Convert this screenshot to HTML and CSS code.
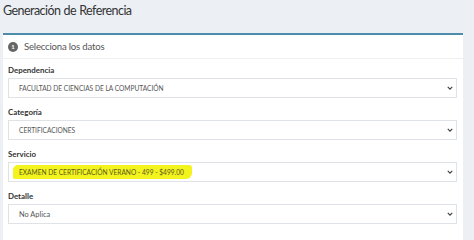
FILE: index.html
```html
<!DOCTYPE html>
<html lang="es">
<head>
<meta charset="utf-8">
<link rel="stylesheet" href="styles.css">
</head>
<body>
<h1 class="page-title">Generación de Referencia</h1>
<div class="box">
  <div class="box-header">
    <span class="step">1</span>
    <span class="box-title">Selecciona los datos</span>
  </div>
  <div class="box-body">
    <div class="group">
      <div class="label">Dependencia</div>
      <div class="select"><span class="value">FACULTAD DE CIENCIAS DE LA COMPUTACIÓN</span><svg class="chev" viewBox="0 0 8 5"><path d="M1 1 L4 4 L7 1" /></svg></div>
    </div>
    <div class="group">
      <div class="label">Categoría</div>
      <div class="select"><span class="value">CERTIFICACIONES</span><svg class="chev" viewBox="0 0 8 5"><path d="M1 1 L4 4 L7 1" /></svg></div>
    </div>
    <div class="group">
      <div class="label">Servicio</div>
      <div class="select"><span class="value highlight">EXAMEN DE CERTIFICACIÓN VERANO - 499 - $499.00</span><svg class="chev" viewBox="0 0 8 5"><path d="M1 1 L4 4 L7 1" /></svg></div>
    </div>
    <div class="group">
      <div class="label">Detalle</div>
      <div class="select"><span class="value normal">No Aplica</span><svg class="chev" viewBox="0 0 8 5"><path d="M1 1 L4 4 L7 1" /></svg></div>
    </div>
  </div>
</div>
</body>
</html>
```
FILE: styles.css
```css
html, body {
  margin: 0;
  padding: 0;
  background: #ecf0f5;
  font-family: "Lato", "Noto Sans", sans-serif;
  color: #444;
}
.page-title {
  margin: 0;
  padding: 4px 0 0 3px;
  height: 33px;
  box-sizing: border-box;
  font-size: 12.5px;
  line-height: 14px;
  font-weight: 400;
  color: #333;
  letter-spacing: -0.55px;
  word-spacing: 0.5px;
}
.box {
  margin-left: 3px;
  width: 460px;
  background: #fff;
  border-top: 2px solid #4f8caa;
  height: 210px;
}
.box-header {
  display: flex;
  align-items: center;
  height: 23px;
  padding-left: 5px;
  border-bottom: 1px solid #f0f0f0;
}
.step {
  display: inline-flex;
  align-items: center;
  justify-content: center;
  width: 10px;
  height: 10px;
  border-radius: 50%;
  background: #666;
  color: #fff;
  font-size: 6px;
  font-weight: 700;
  margin-right: 6px;
}
.box-title {
  font-size: 9.6px;
  letter-spacing: -0.2px;
  color: #555;
}
.box-body {
  padding: 4px 6px 0 5px;
  display: flex;
  flex-direction: column;
  gap: 7px;
}
.label {
  font-size: 7.9px;
  font-weight: 700;
  color: #333;
  height: 15px;
  line-height: 15px;
}
.select {
  height: 20px;
  box-sizing: border-box;
  border: 1px solid #dfe2e6;
  display: flex;
  align-items: center;
  padding-left: 10px;
  padding-right: 3px;
  background: #fff;
}
.value {
  flex: 1;
  font-size: 6.6px;
  color: #555;
  white-space: nowrap;
}
.value.normal {
  font-size: 7.4px;
}
.highlight {
  flex: 0 0 auto;
  background: #f3f31e;
  padding: 3px 8px 3px 6px;
  margin-left: -6px;
  border-radius: 5px 3px 6px 2px;
  color: #5a5a1e;
  margin-right: auto;
}
.chev {
  width: 6px;
  height: 4px;
  margin-left: auto;
}
.chev path {
  fill: none;
  stroke: #444;
  stroke-width: 1.6;
}
```
